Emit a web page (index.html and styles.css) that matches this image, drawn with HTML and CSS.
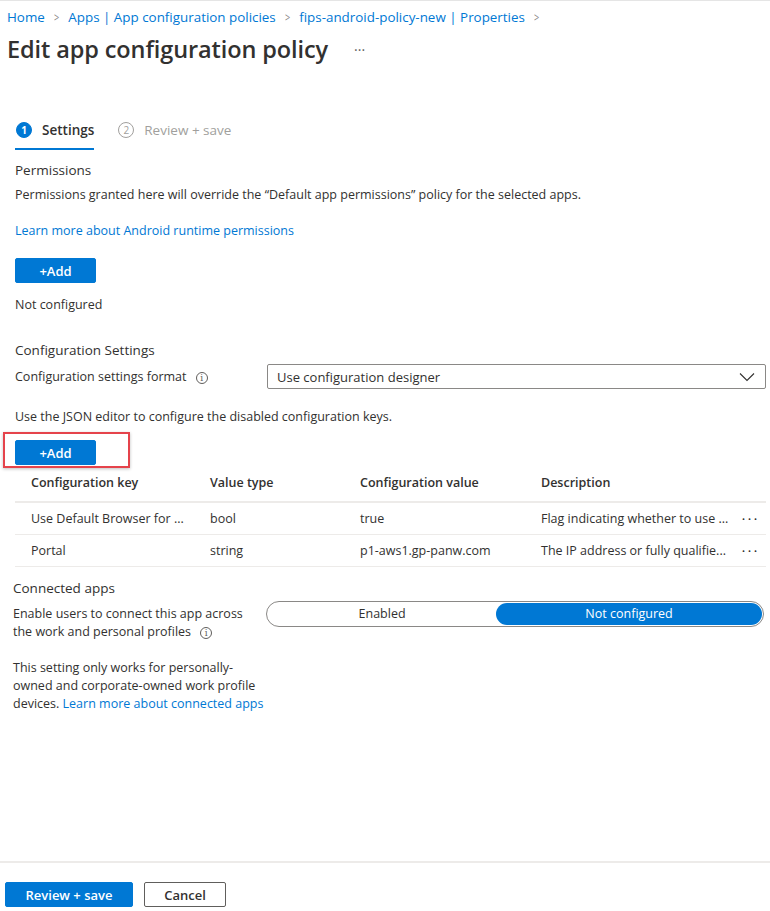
FILE: index.html
```html
<!DOCTYPE html>
<html>
<head>
<meta charset="utf-8">
<link rel="stylesheet" href="styles.css">
</head>
<body>
<div class="page">
  <nav class="crumbs">
    <a>Home</a><span class="chev">&gt;</span>
    <a>Apps | App configuration policies</a><span class="chev">&gt;</span>
    <a>fips-android-policy-new | Properties</a><span class="chev">&gt;</span>
  </nav>
  <div class="titlebar">
    <h1>Edit app configuration policy</h1>
    <span class="more">···</span>
  </div>

  <div class="tabs">
    <div class="tab active"><span class="num">1</span><span class="tlabel">Settings</span></div>
    <div class="tab"><span class="num">2</span><span class="tlabel">Review + save</span></div>
  </div>

  <section class="sec perm">
    <div class="sec-title">Permissions</div>
    <p class="desc">Permissions granted here will override the “Default app permissions” policy for the selected apps.</p>
    <a class="link learn">Learn more about Android runtime permissions</a>
    <button class="btn primary add">+Add</button>
    <div class="nc">Not configured</div>
  </section>

  <section class="sec conf">
    <div class="sec-title">Configuration Settings</div>
    <div class="format-row">
      <span class="label">Configuration settings format <span class="info">i</span></span>
      <div class="select">Use configuration designer
        <svg class="caret" width="16" height="10" viewBox="0 0 16 10"><path d="M1 1.5 L8 8.5 L15 1.5" fill="none" stroke="#323130" stroke-width="1.1"/></svg>
      </div>
    </div>
    <p class="desc json">Use the JSON editor to configure the disabled configuration keys.</p>
    <div class="hl"><button class="btn primary add">+Add</button></div>
    <div class="table">
      <div class="tr th"><span>Configuration key</span><span>Value type</span><span>Configuration value</span><span>Description</span><span></span></div>
      <div class="tr"><span>Use Default Browser for ...</span><span>bool</span><span>true</span><span>Flag indicating whether to use ...</span><span class="dots">•••</span></div>
      <div class="tr"><span>Portal</span><span>string</span><span>p1-aws1.gp-panw.com</span><span>The IP address or fully qualifie...</span><span class="dots">•••</span></div>
    </div>
  </section>

  <section class="sec conn">
    <div class="sec-title">Connected apps</div>
    <div class="conn-row">
      <span class="label">Enable users to connect this app across the work and personal profiles <span class="info">i</span></span>
      <div class="toggle"><span class="opt off">Enabled</span><span class="opt on">Not configured</span></div>
    </div>
    <p class="note">This setting only works for personally-owned and corporate-owned work profile devices. <a class="link">Learn more about connected apps</a></p>
  </section>
</div>
<footer class="foot">
  <button class="btn primary big">Review + save</button>
  <button class="btn outline">Cancel</button>
</footer>
</body>
</html>
```

FILE: styles.css
```css
* { box-sizing: border-box; }
html, body { margin: 0; padding: 0; background: #fff; }
body {
  font-family: "Open Sans", "Noto Sans", sans-serif;
  font-size: 12.5px;
  color: #323130;
  width: 770px;
  height: 911px;
  border-top: 1px solid #e5e5e5;
  position: relative;
  overflow: hidden;
}
.page { padding: 0 4px 0 15px; }
.link, .crumbs a { color: #0078d4; text-decoration: none; }
.crumbs {
  margin-left: -8px;
  padding-top: 6px;
  font-size: 13.4px;
  line-height: 20px;
  display: flex;
  align-items: center;
  color: #0078d4;
}
.chev { color: #8a8886; margin: 0 8px; font-size: 13px; transform: scaleX(0.7); display: inline-block; }
.titlebar { display: flex; align-items: center; margin-left: -8px; height: 36px; margin-top: 4px; }
h1 { margin: 0; font-size: 23.5px; font-weight: 600; color: #323130; letter-spacing: -0.1px; }
.more { margin-left: 26px; color: #605e5c; font-size: 14px; }

.tabs { display: flex; gap: 24px; margin-top: 53px; height: 33px; }
.tab { display: flex; align-items: flex-start; gap: 10px; height: 30px; font-size: 13.5px; color: #a19f9d; }
.tab.active { color: #323130; font-weight: 600; border-bottom: 2px solid #0078d4; padding: 0 0 0 1px; height: 30px; }
.num {
  width: 16px; height: 16px; border-radius: 50%;
  border: 1px solid #a19f9d; font-size: 10px; line-height: 14px; text-align: center;
  margin-top: 2px; font-weight: 400;
}
.tab.active .num { background: #0078d4; border-color: #0078d4; color: #fff; font-weight: 700; }
.tlabel { line-height: 20px; }

.sec-title { font-size: 13.5px; line-height: 20px; }
.desc { margin: 0; line-height: 20px; }
.perm { margin-top: 7px; }
.perm .desc { margin-top: 5px; }
.learn { display: block; margin-top: 16px; line-height: 20px; }
.btn {
  font-family: inherit; font-size: 13px; font-weight: 600; border-radius: 2px; cursor: pointer;
}
.btn.primary { background: #0078d4; color: #fff; border: 1px solid #0078d4; }
.add { width: 81px; height: 25px; display: block; padding: 0; }
.perm .add { margin-top: 17px; }
.nc { margin-top: 13px; line-height: 18px; }

.conf { margin-top: 26px; }
.format-row { display: flex; align-items: center; justify-content: space-between; margin-top: 4px; }
.label { line-height: 18px; }
.info {
  display: inline-block; width: 12px; height: 12px; border: 1px solid #605e5c; border-radius: 50%;
  font-size: 9px; line-height: 10px; text-align: center; color: #605e5c; margin-left: 6px; vertical-align: 0;
  font-family: "DejaVu Serif", serif;
}
.select {
  width: 499px; height: 25px; border: 1px solid #8a8886; border-radius: 2px;
  display: flex; align-items: center; justify-content: space-between; padding: 0 10px 0 9px; font-size: 13px;
}
.json { margin-top: 18px; }
.hl { margin: 5px 0 0 -12px; width: 127px; height: 36px; border: 2px solid #e5434b; padding: 6px 0 0 10px; box-shadow: 0 1px 3px rgba(0,0,0,.25); }
.table { margin-top: -4px; }
.tr { display: grid; grid-template-columns: 179px 150px 181px 199px 24px; align-items: center; height: 32px; border-bottom: 1px solid #edebe9; padding-left: 16px; }
.tr.th { font-weight: 600; height: 39px; border-bottom: 2px solid #edebe9; align-items: start; padding-top: 10px; }
.dots { font-size: 8px; letter-spacing: 3px; color: #323130; padding-left: 2px; }

.conn { margin-top: 11px; margin-left: -2px; }
.conn-row { display: flex; align-items: flex-start; justify-content: space-between; margin-top: 7px; }
.conn-row .label { width: 240px; }
.toggle {
  width: 498px; height: 26px; border: 1px solid #8a8886; border-radius: 13px; display: flex; padding: 1px; margin: -4px 2px 0 0;
}
.opt { text-align: center; line-height: 22px; border-radius: 11px; }
.opt.off { flex: 229 1 0; }
.opt.on { flex: 267 1 0; background: #0078d4; color: #fff; }
.note { margin: 18px 0 0; width: 256px; line-height: 18px; }

.foot {
  position: absolute; left: 0; right: 0; bottom: 0; height: 50px; border-top: 2px solid #edebe9;
  display: flex; align-items: flex-end; gap: 11px; padding: 0 5px 4px;
}
.foot .big { width: 128px; height: 25px; padding: 0; }
.outline { width: 82px; height: 25px; background: #fff; color: #323130; border: 1px solid #605e5c; padding: 0; }
```
